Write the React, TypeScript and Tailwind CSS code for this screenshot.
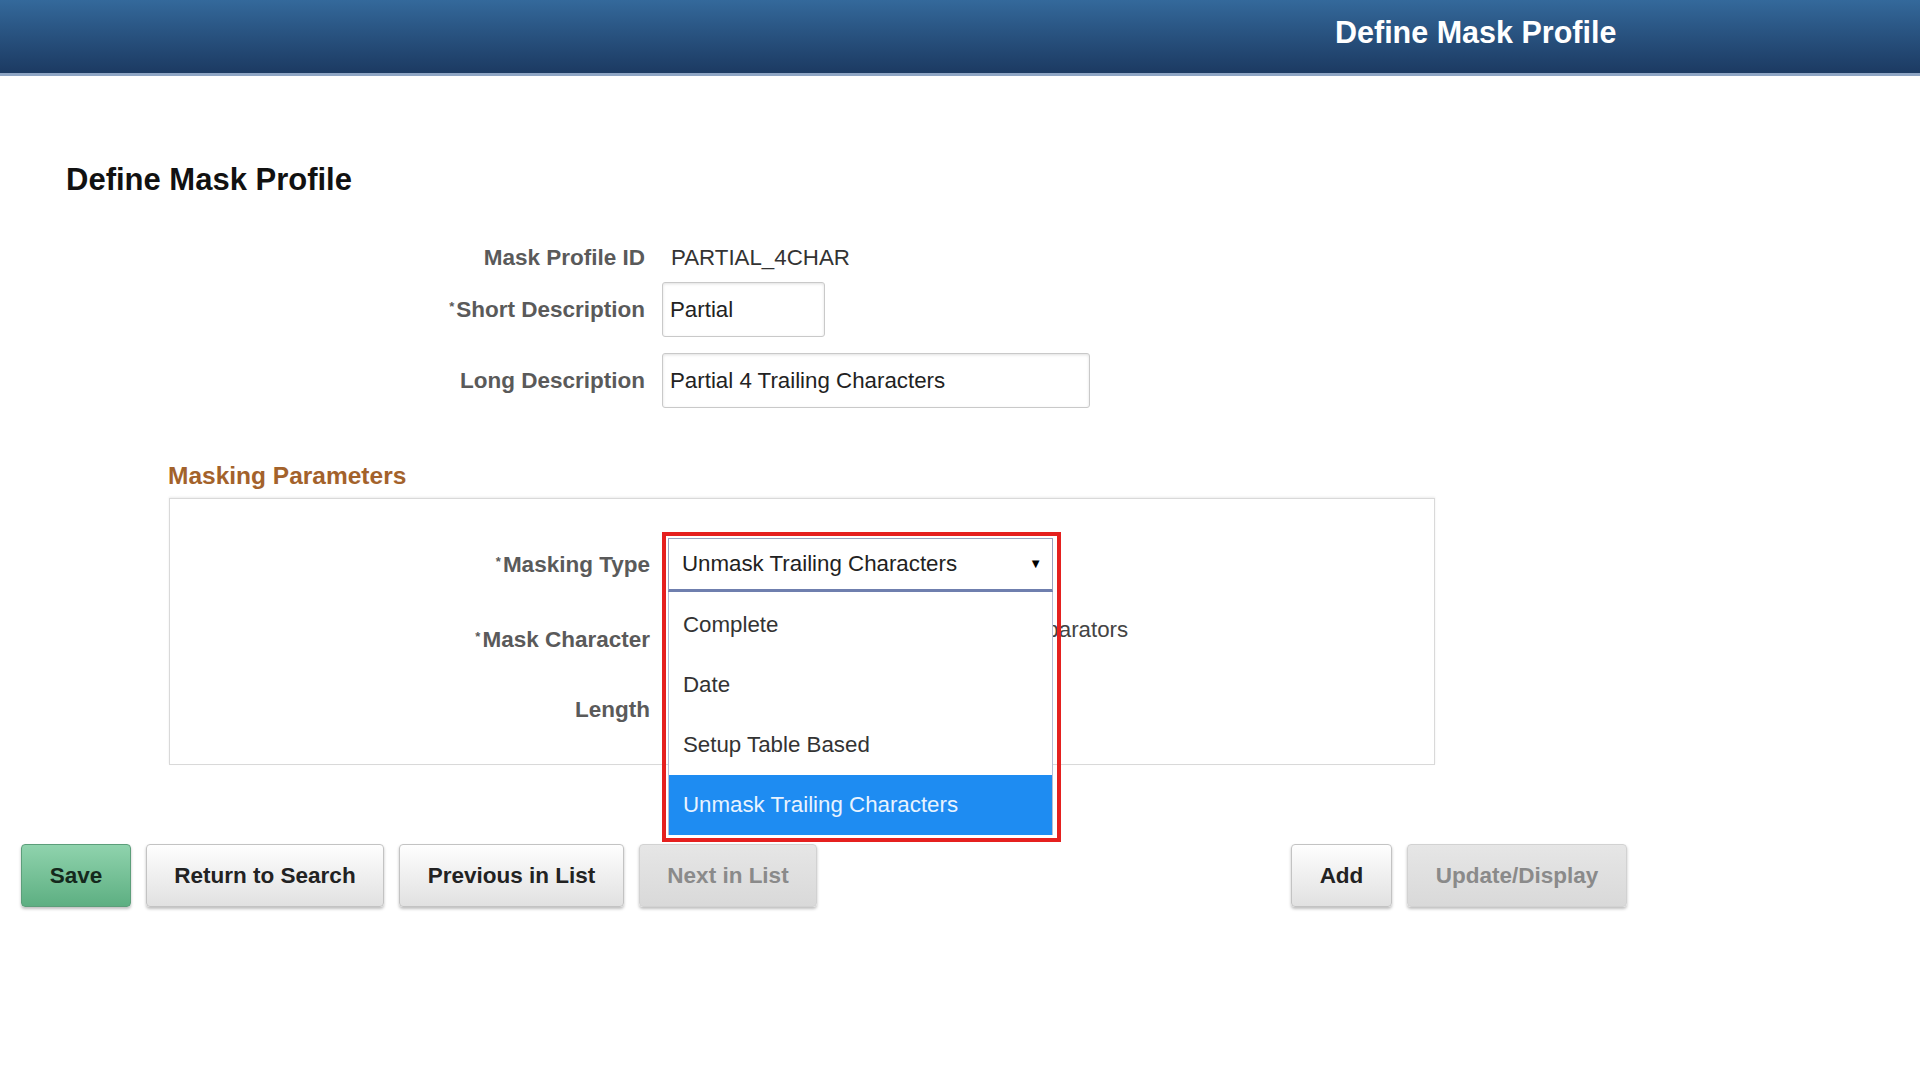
import React from "react";

const options = ["Complete", "Date", "Setup Table Based", "Unmask Trailing Characters"];

const Label = ({ text, required }: { text: string; required?: boolean }) => (
  <div className="text-right text-[22.5px] font-bold text-[#5a5a5a]">
    {required && <span className="relative -top-[6px] mr-[2px] text-[13px]">*</span>}
    {text}
  </div>
);

const Button = ({ label, kind, w }: { label: string; kind: "save" | "normal" | "disabled"; w: string }) => {
  const look =
    kind === "save"
      ? "bg-gradient-to-b from-[#8fd3ad] to-[#5daf82] border-[#5c9e7a] text-[#14281c]"
      : kind === "disabled"
      ? "bg-gradient-to-b from-[#e6e6e6] to-[#d9d9d9] border-[#d2d2d2] text-[#8a8a8a]"
      : "bg-gradient-to-b from-[#fefefe] to-[#e1e1e1] border-[#c3c3c3] text-[#222]";
  return (
    <button
      className={`${w} h-[63px] rounded-[4px] border text-[22.5px] font-bold shadow-[0_2px_3px_rgba(0,0,0,0.25)] ${look}`}
    >
      {label}
    </button>
  );
};

export default function App() {
  return (
    <div className="min-h-screen w-full bg-white font-['Liberation_Sans',Arial,sans-serif]">
      {/* Banner */}
      <div className="h-[76px] border-b-[3px] border-[#8ea5c4] bg-gradient-to-b from-[#34699b] to-[#1c3a62]">
        <div className="flex h-full items-center pb-[8px] pl-[1335px]">
          <span className="text-[30.5px] font-bold text-white">Define Mask Profile</span>
        </div>
      </div>

      {/* Page title */}
      <h1 className="ml-[66px] mt-[86px] text-[31px] font-bold leading-[36px] text-[#111]">Define Mask Profile</h1>

      {/* Header fields */}
      <div className="mt-[42px] flex flex-col">
        <div className="flex h-[35px] items-center">
          <div className="w-[645px] shrink-0">
            <Label text="Mask Profile ID" />
          </div>
          <span className="ml-[26px] text-[22.3px] text-[#333]">PARTIAL_4CHAR</span>
        </div>
        <div className="mt-[7px] flex h-[55px] items-center">
          <div className="w-[645px] shrink-0">
            <Label text="Short Description" required />
          </div>
          <div className="ml-[17px] flex h-[55px] w-[163px] items-center rounded-[3px] border border-[#c9c9c9] px-[7px] text-[22.3px] text-[#222] shadow-[inset_0_1px_3px_rgba(0,0,0,0.12)]">
            Partial
          </div>
        </div>
        <div className="mt-[16px] flex h-[55px] items-center">
          <div className="w-[645px] shrink-0">
            <Label text="Long Description" />
          </div>
          <div className="ml-[17px] flex h-[55px] w-[428px] items-center rounded-[3px] border border-[#c9c9c9] px-[7px] text-[22.3px] text-[#222] shadow-[inset_0_1px_3px_rgba(0,0,0,0.12)]">
            Partial 4 Trailing Characters
          </div>
        </div>
      </div>

      {/* Masking Parameters group */}
      <div className="ml-[168px] mt-[53px] text-[24.5px] font-bold leading-[30px] text-[#a3622b]">Masking Parameters</div>
      <div className="ml-[169px] mt-[7px] h-[267px] w-[1266px] border border-[#d9d9d9] shadow-[0_-1px_2px_rgba(0,0,0,0.08)]">
        <div className="h-[39px]" />
        <div className="flex h-[54px] items-center">
          <div className="w-[480px] shrink-0">
            <Label text="Masking Type" required />
          </div>
          <div className="relative ml-[18px] h-[54px] w-[385px]">
            <div className="flex h-full items-center justify-between border border-[#9aa3c0] border-b-[3px] border-b-[#6f7fae] bg-white pl-[13px] pr-[10px] text-[22.3px] text-[#222]">
              <span>Unmask Trailing Characters</span>
              <span className="text-[13px] text-black">▼</span>
            </div>
            <div className="absolute left-0 top-full z-10 w-full border-x border-[#b7bfd6] bg-white pt-[3px]">
              {options.map((o, i) => (
                <div
                  key={o}
                  className={`flex h-[60px] items-center pl-[14px] text-[22.3px] ${
                    i === 3 ? "bg-[#1e8cf2] text-[#e8f3ff]" : "text-[#333]"
                  }`}
                >
                  {o}
                </div>
              ))}
            </div>
            <div className="pointer-events-none absolute left-[-6px] top-[-6px] z-20 h-[310px] w-[399px] border-[4px] border-[#e5201f]" />
          </div>
        </div>
        <div className="mt-[28px] flex h-[40px] items-center">
          <div className="w-[480px] shrink-0">
            <Label text="Mask Character" required />
          </div>
          <span className="-mt-[20px] ml-[291px] text-[22.3px] text-[#444]">Include Separators</span>
        </div>
        <div className="mt-[30px] flex h-[40px] items-center">
          <div className="w-[480px] shrink-0">
            <Label text="Length" />
          </div>
        </div>
      </div>

      {/* Toolbar */}
      <div className="mt-[79px] flex items-center gap-[15px] pl-[21px]">
        <Button label="Save" kind="save" w="w-[110px]" />
        <Button label="Return to Search" kind="normal" w="w-[238px]" />
        <Button label="Previous in List" kind="normal" w="w-[225px]" />
        <Button label="Next in List" kind="disabled" w="w-[178px]" />
        <div className="w-[444px]" />
        <Button label="Add" kind="normal" w="w-[101px]" />
        <Button label="Update/Display" kind="disabled" w="w-[220px]" />
      </div>
    </div>
  );
}
